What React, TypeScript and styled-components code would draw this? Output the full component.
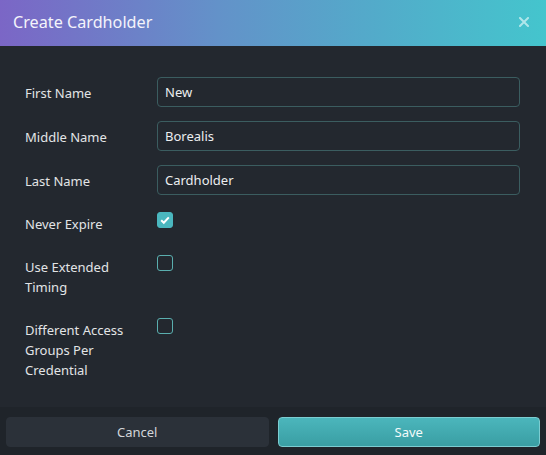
import styled, {createGlobalStyle} from 'styled-components';

const GlobalStyle = createGlobalStyle`
  html, body {
    margin: 0;
    padding: 0;
    background: #23282f;
  }
  * {
    box-sizing: border-box;
  }
`;

type TextField = {label: string; value: string};
type CheckField = {label: string; checked: boolean};

const textFields: TextField[] = [
  {label: 'First Name', value: 'New'},
  {label: 'Middle Name', value: 'Borealis'},
  {label: 'Last Name', value: 'Cardholder'},
];

const checkFields: CheckField[] = [
  {label: 'Never Expire', checked: true},
  {label: 'Use Extended Timing', checked: false},
  {label: 'Different Access Groups Per Credential', checked: false},
];

export default function App() {
  return (
    <>
      <GlobalStyle />
      <Dialog>
        <Header>
          <Title>Create Cardholder</Title>
          <CloseButton aria-label="close">
            <svg width="10" height="10" viewBox="0 0 10 10">
              <path d="M1 1L9 9M9 1L1 9" stroke="currentColor" strokeWidth="2" strokeLinecap="square" />
            </svg>
          </CloseButton>
        </Header>
        <Body>
          {textFields.map(f => (
            <InputRow key={f.label}>
              <Label>{f.label}</Label>
              <Input defaultValue={f.value} />
            </InputRow>
          ))}
          {checkFields.map(f => (
            <CheckRow key={f.label}>
              <CheckLabel>{f.label}</CheckLabel>
              <Checkbox $checked={f.checked}>
                {f.checked && (
                  <svg width="12" height="12" viewBox="0 0 12 12">
                    <path d="M2.2 6.3L4.8 8.8L9.8 3.4" fill="none" stroke="#fff" strokeWidth="2" />
                  </svg>
                )}
              </Checkbox>
            </CheckRow>
          ))}
        </Body>
        <Footer>
          <Button>Cancel</Button>
          <Button $primary>Save</Button>
        </Footer>
      </Dialog>
    </>
  );
}

const Dialog = styled.div`
  width: 546px;
  height: 455px;
  display: flex;
  flex-direction: column;
  background: #23282f;
  font-family: "Noto Sans", "Open Sans", sans-serif;
  color: #e2e4e6;
  overflow: hidden;
`;

const Header = styled.div`
  height: 46px;
  flex-shrink: 0;
  display: flex;
  align-items: center;
  justify-content: space-between;
  padding: 0 17px 2px 13px;
  background: linear-gradient(90deg, #7b66c6 0%, #6392c9 40%, #52acca 70%, #44c5cd 100%);
`;

const Title = styled.div`
  font-size: 16.2px;
  color: #f4f4fb;
`;

const CloseButton = styled.div`
  display: flex;
  color: rgba(220, 245, 247, 0.7);
`;

const Body = styled.div`
  flex: 1;
  display: flex;
  flex-direction: column;
  gap: 14px;
  padding: 31px 26px 0 25px;
`;

const InputRow = styled.div`
  display: flex;
  align-items: center;
  height: 30px;
`;

const Label = styled.div`
  width: 132px;
  flex-shrink: 0;
  padding-top: 1px;
  font-size: 13px;
  line-height: 20px;
`;

const Input = styled.input`
  flex: 1;
  height: 30px;
  padding: 0 7px;
  border: 1px solid #3b5d60;
  border-radius: 4px;
  background: #23282f;
  color: #eceef0;
  font-family: inherit;
  font-size: 13px;
  outline: none;
`;

const CheckRow = styled.div`
  display: flex;
  align-items: flex-start;
  padding: 3px 0 4px;
`;

const CheckLabel = styled(Label)`
  width: 132px;
  padding: 2px 22px 0 0;
`;

const Checkbox = styled.div<{$checked?: boolean}>`
  width: 16px;
  height: 16px;
  border-radius: 3px;
  display: flex;
  align-items: center;
  justify-content: center;
  border: 1px solid ${p => (p.$checked ? '#4ab7bf' : '#5aaeae')};
  background: ${p => (p.$checked ? '#4ab7bf' : 'transparent')};
`;

const Footer = styled.div`
  height: 48px;
  flex-shrink: 0;
  display: flex;
  gap: 9px;
  padding: 10px 6px 8px;
  background: #1f242a;
`;

const Button = styled.button<{$primary?: boolean}>`
  flex: 1;
  height: 30px;
  border-radius: 4px;
  font-family: inherit;
  font-size: 13px;
  cursor: pointer;
  color: ${p => (p.$primary ? '#f3fbfb' : '#d3d6d9')};
  border: 1px solid ${p => (p.$primary ? '#7ccdd1' : '#2b3139')};
  background: ${p => (p.$primary ? 'linear-gradient(180deg, #4bb6bc 0%, #3a9ea3 100%)' : '#2b3139')};
`;
